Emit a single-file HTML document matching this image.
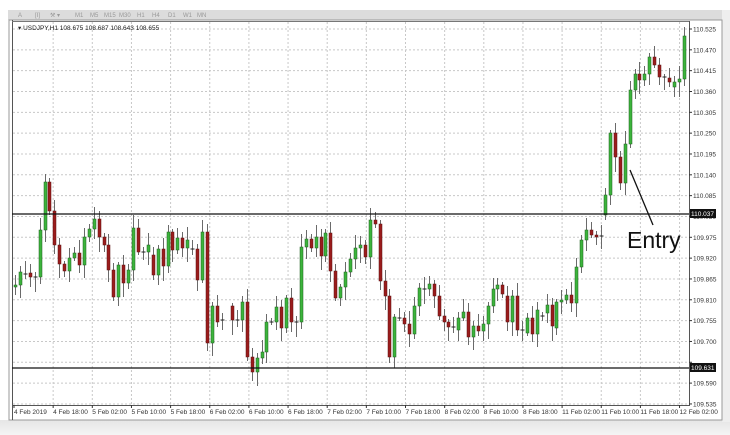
<!DOCTYPE html>
<html><head><meta charset="utf-8"><style>
html,body{margin:0;padding:0;width:730px;height:435px;overflow:hidden;background:#fff;font-family:"Liberation Sans",sans-serif}
</style></head><body>
<svg id="s" width="730" height="435" xmlns="http://www.w3.org/2000/svg" style="position:absolute;left:0;top:0">
<defs><linearGradient id="g" x1="0" y1="0" x2="0" y2="1"><stop offset="0" stop-color="#e6e6e6"/><stop offset="1" stop-color="#f4f4f4"/></linearGradient></defs>
<rect x="0" y="0" width="730" height="435" fill="#fff"/>
<rect x="0" y="420" width="730" height="15" fill="url(#g)"/>
<rect x="722" y="10" width="8" height="412" fill="#eeeeee"/>
<rect x="8" y="10" width="714" height="10" fill="#dcdcdc"/>
<g font-size="6" fill="#999">
<text x="18" y="17">A</text><text x="35" y="17">[I]</text><text x="50" y="17">⚒ ▾</text>
<text x="75" y="17">M1</text><text x="90" y="17">M5</text><text x="104" y="17">M15</text><text x="119" y="17">M30</text>
<text x="137" y="17">H1</text><text x="152" y="17">H4</text><text x="168" y="17">D1</text><text x="183" y="17">W1</text><text x="197" y="17">MN</text>
</g>
<rect x="9" y="20" width="713" height="400" fill="#fff" stroke="#999" stroke-width="1"/>
<line x1="12.5" y1="20" x2="12.5" y2="420" stroke="#555"/>
<line x1="12" y1="21.5" x2="690" y2="21.5" stroke="#777"/>
<line x1="689.5" y1="21" x2="689.5" y2="406" stroke="#555"/>
<line x1="12" y1="405.5" x2="690" y2="405.5" stroke="#555"/>
<g id="grid" stroke="#c8c8c8" stroke-dasharray="2,2" stroke-width="1"></g>
<g id="c"></g>
<line x1="12" y1="214" x2="689" y2="214" stroke="#111" stroke-width="1.3"/>
<line x1="12" y1="368" x2="689" y2="368" stroke="#111" stroke-width="1.3"/>
<g id="ax" font-size="6.5" fill="#333"></g>
<rect x="690" y="209" width="26" height="9" fill="#111"/><text x="691" y="216" font-size="6.5" fill="#fff">110.037</text>
<rect x="690" y="363" width="26" height="9" fill="#111"/><text x="691" y="370" font-size="6.5" fill="#fff">109.631</text>
<text x="18" y="30" font-size="6.5" fill="#222">▾ USDJPY,H1  108.675 108.687 108.643 108.655</text>
<line x1="630" y1="170" x2="653" y2="225" stroke="#111" stroke-width="1.3"/>
<text x="627" y="248" font-size="23" fill="#111">Entry</text>
</svg>
<script>
var NS="http://www.w3.org/2000/svg";
function el(p,t,a){var e=document.createElementNS(NS,t);for(var k in a)e.setAttribute(k,a[k]);p.appendChild(e);return e;}
var grid=document.getElementById('grid'),ax=document.getElementById('ax'),cg=document.getElementById('c');
var dates=["4 Feb 2019","4 Feb 18:00","5 Feb 02:00","5 Feb 10:00","5 Feb 18:00","6 Feb 02:00","6 Feb 10:00","6 Feb 18:00","7 Feb 02:00","7 Feb 10:00","7 Feb 18:00","8 Feb 02:00","8 Feb 10:00","8 Feb 18:00","11 Feb 02:00","11 Feb 10:00","11 Feb 18:00","12 Feb 02:00"];
for(var i=0;i<18;i++){var x=14+i*39.15;if(i>0)el(grid,'line',{x1:x,y1:22,x2:x,y2:405});
 var t=el(ax,'text',{x:x,y:414});t.textContent=dates[i];el(ax,'line',{x1:x,y1:405,x2:x,y2:408,stroke:"#333"});}
for(var j=0;j<19;j++){var y=29+j*20.83;el(grid,'line',{x1:13,y1:y,x2:689,y2:y});
 if(j!=16){var tt=el(ax,'text',{x:693,y:y+2.5});tt.textContent=(110.525-j*0.055).toFixed(3);}
 el(ax,'line',{x1:689,y1:y,x2:692,y2:y,stroke:"#333"});}
var A=[[287,285],[285,272],[274,274],[273,277],[277,277],[277,230],[230,182],[182,211],[211,245],[245,264],[264,271],[271,258],[258,253],[253,265],[265,237],[237,229],[229,219],[219,237],[237,245],[245,270],[270,297],[297,265],[265,283],[283,270],[270,228],[228,252],[252,252],[252,245],[255,275],[275,249],[249,266],[266,232],[232,250],[250,238],[238,248],[248,240],[249,249],[249,280],[280,232],[232,343],[343,306],[306,322],[320,320]];
var B=[[306,320],[320,320],[320,302],[302,357],[357,372],[372,358],[358,352],[352,322],[322,322],[322,307],[307,328],[328,298],[298,322],[322,322],[322,247],[247,239],[239,248],[248,237],[237,256],[256,233],[233,271],[271,298],[298,287],[287,272],[272,259],[259,248],[248,245],[245,257],[257,220],[220,224],[224,281],[281,296],[296,357],[357,317],[318,318],[318,324],[324,334],[334,306],[306,288],[289,289],[289,284],[284,296],[296,316],[316,322],[322,327],[327,327],[330,318]];
var C=[[318,312],[312,337],[337,326],[326,331],[331,324],[324,306],[306,289],[289,285],[285,294],[296,322],[322,296],[296,330],[330,330],[333,318],[318,334],[334,310],[316,316],[313,305],[305,326],[328,302],[302,300],[300,295],[295,303],[303,267],[267,240],[240,230],[230,235],[235,237],[236,236]];
var D=[[215,195],[195,133],[133,157],[157,183],[183,144],[144,90],[90,74],[74,80],[80,74],[74,57],[57,65],[65,77],[77,77],[78,82],[87,82],[82,79],[79,36]];
var n=0;
function draw(arr,x0){for(var i=0;i<arr.length;i++){var o=arr[i][0],c=arr[i][1],x=Math.round(x0+i*4.92)+0.5;n++;
 var top=Math.min(o,c),bot=Math.max(o,c);var wh=3+(n*7%11),wl=3+(n*5%13);
 el(cg,'line',{x1:x,y1:top-wh,x2:x,y2:bot+wl,stroke:"#6a6a6a","stroke-width":1});
 if(o==c){el(cg,'line',{x1:x-2,y1:o,x2:x+2,y2:o,stroke:"#222","stroke-width":1});}
 else{var up=c<o;el(cg,'rect',{x:x-1.5,y:top,width:3,height:Math.max(1,bot-top),fill:up?"#3cb43c":"#9b1c1c",stroke:up?"#1f5f1f":"#5a1010","stroke-width":0.5});}}}
draw(A,15);draw(B,232);draw(C,463);draw(D,605);
</script>
</body></html>
